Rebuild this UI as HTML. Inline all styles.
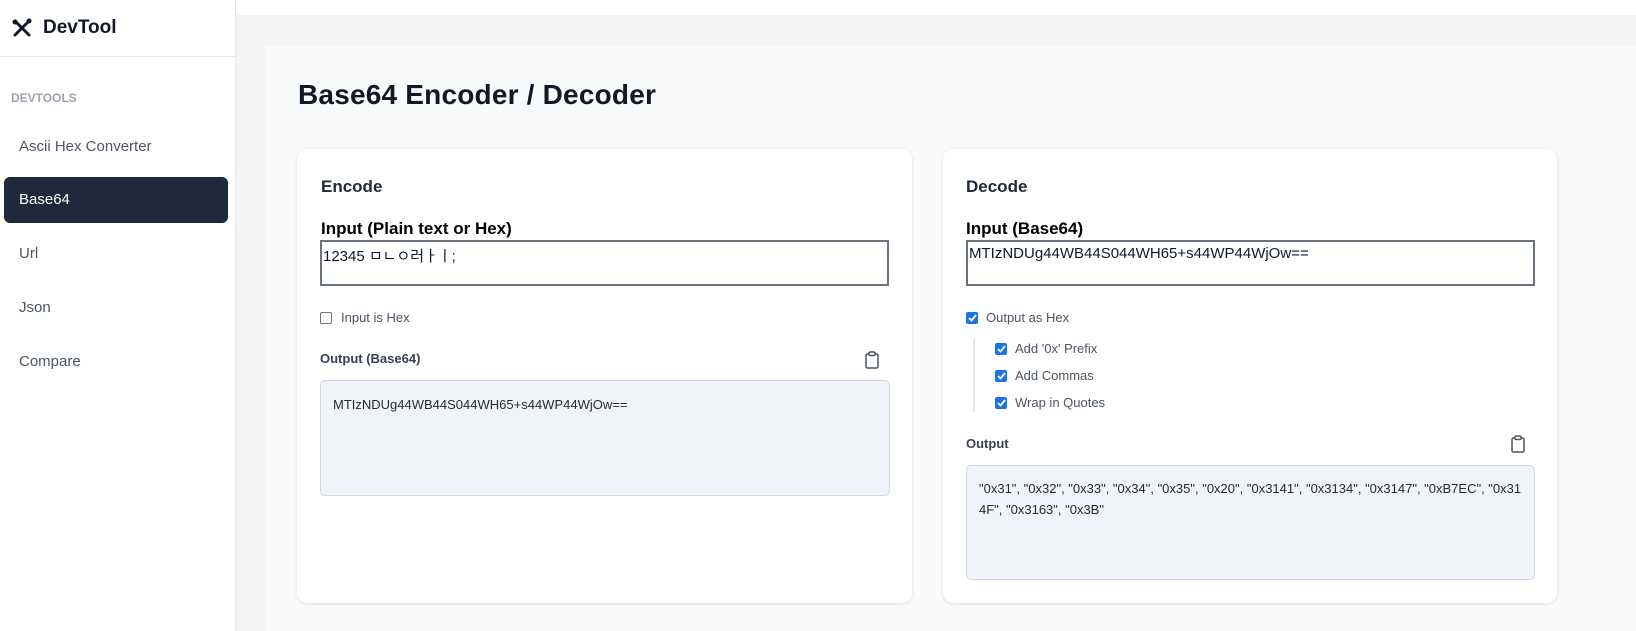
<!DOCTYPE html>
<html><head><meta charset="utf-8"><style>
*{box-sizing:border-box;margin:0;padding:0}
body{width:1636px;height:631px;overflow:hidden;font-family:"Liberation Sans","Noto Sans CJK KR",sans-serif;background:#fff;position:relative;color:#111827}
.side{position:absolute;left:0;top:0;width:236px;height:631px;background:#fff;border-right:1px solid #e5e7eb}
.logo{height:57px;border-bottom:1px solid #e5e7eb;display:flex;align-items:center;padding-left:11px;font-weight:bold;font-size:19px;color:#111827}
.logo svg{margin-right:10px}
.sec{position:absolute;left:11px;top:91px;font-size:12px;font-weight:bold;color:#9ca3af}
.nav{position:absolute;left:19px;font-size:15px;color:#4b5563}
.act{position:absolute;left:4px;top:177px;width:224px;height:46px;background:#1e293b;border-radius:6px;color:#fff;font-size:15px;padding:14px 0 0 15px}
.main{position:absolute;left:236px;top:15px;right:0;bottom:0;background:#f3f4f6}
.inner{position:absolute;left:266px;top:46px;right:0;bottom:0;background:#f9fafb}
h1{position:absolute;left:298px;top:79px;font-size:28px;font-weight:900;color:#111827;letter-spacing:0.2px}
.card{position:absolute;top:149px;height:454px;background:#fff;border-radius:10px;box-shadow:0 1px 3px rgba(0,0,0,.12)}
.t{position:absolute;font-size:17px;font-weight:bold;color:#1f2937}
.lbl{position:absolute;font-size:17px;font-weight:bold;color:#000}
.ta{position:absolute;border:2px solid #6b7280;height:46px;font-size:15px;padding:3px 1px}
.cb{position:absolute;font-size:13px;color:#4b5563;display:flex;align-items:center}
.box{width:12px;height:12px;border:1px solid #6b7280;border-radius:2px;margin-right:9px;background:#fff}
.chk{width:12px;height:12px;border-radius:2px;margin-right:8px;background:#1a73e8;display:flex;align-items:center;justify-content:center}
.ol{position:absolute;font-size:13px;font-weight:bold;color:#374151}
.out{position:absolute;background:#f0f3f8;border:1px solid #d1d9e6;border-radius:5px;font-size:13px;color:#1f2937;line-height:21px}
</style></head><body>
<div class="side">
<div class="logo"><svg width="22" height="20" viewBox="0 0 22 20"><path d="M4 3l14 14M4 17l6-6M12 9l6-6" stroke="#111827" stroke-width="3" fill="none" stroke-linecap="round"/><circle cx="4" cy="4" r="2.5" fill="#111827"/><circle cx="18" cy="3" r="2.5" fill="#111827"/></svg>DevTool</div>
<div class="sec">DEVTOOLS</div>
<div class="nav" style="top:138px">Ascii Hex Converter</div>
<div class="act">Base64</div>
<div class="nav" style="top:245px">Url</div>
<div class="nav" style="top:299px">Json</div>
<div class="nav" style="top:353px">Compare</div>
</div>
<div class="main"></div>
<div class="inner"></div>
<h1>Base64 Encoder / Decoder</h1>
<div class="card" style="left:297px;width:615px"></div>
<div class="card" style="left:943px;width:614px"></div>
<div class="t" style="left:321px;top:177px">Encode</div>
<div class="lbl" style="left:321px;top:219px">Input (Plain text or Hex)</div>
<div class="ta" style="left:320px;top:240px;width:569px">12345 ㅁㄴㅇ러ㅏㅣ;</div>
<div class="cb" style="left:320px;top:310px"><div class="box"></div>Input is Hex</div>
<div class="ol" style="left:320px;top:351px">Output (Base64)</div>
<svg style="position:absolute;left:864px;top:351px" width="16" height="18" viewBox="0 0 16 18"><rect x="2" y="3" width="12" height="14" rx="1.5" fill="none" stroke="#4b5563" stroke-width="1.5"/><rect x="5" y="1" width="6" height="3.5" rx="1" fill="#fff" stroke="#4b5563" stroke-width="1.5"/></svg>
<div class="out" style="left:320px;top:380px;width:570px;height:116px;padding:13px 12px">MTIzNDUg44WB44S044WH65+s44WP44WjOw==</div>
<div class="t" style="left:966px;top:177px">Decode</div>
<div class="lbl" style="left:966px;top:219px">Input (Base64)</div>
<div class="ta" style="left:966px;top:240px;width:569px">MTIzNDUg44WB44S044WH65+s44WP44WjOw==</div>
<div class="cb" style="left:966px;top:310px"><div class="chk"><svg width="9" height="8"><path d="M1 4l2.5 2.5L8 1" stroke="#fff" stroke-width="1.8" fill="none"/></svg></div>Output as Hex</div>
<div style="position:absolute;left:973px;top:338px;width:2px;height:74px;background:#e5e7eb"></div>
<div class="cb" style="left:995px;top:341px"><div class="chk"><svg width="9" height="8"><path d="M1 4l2.5 2.5L8 1" stroke="#fff" stroke-width="1.8" fill="none"/></svg></div>Add '0x' Prefix</div>
<div class="cb" style="left:995px;top:368px"><div class="chk"><svg width="9" height="8"><path d="M1 4l2.5 2.5L8 1" stroke="#fff" stroke-width="1.8" fill="none"/></svg></div>Add Commas</div>
<div class="cb" style="left:995px;top:395px"><div class="chk"><svg width="9" height="8"><path d="M1 4l2.5 2.5L8 1" stroke="#fff" stroke-width="1.8" fill="none"/></svg></div>Wrap in Quotes</div>
<div class="ol" style="left:966px;top:436px">Output</div>
<svg style="position:absolute;left:1510px;top:435px" width="16" height="18" viewBox="0 0 16 18"><rect x="2" y="3" width="12" height="14" rx="1.5" fill="none" stroke="#4b5563" stroke-width="1.5"/><rect x="5" y="1" width="6" height="3.5" rx="1" fill="#fff" stroke="#4b5563" stroke-width="1.5"/></svg>
<div class="out" style="left:966px;top:465px;width:569px;height:115px;padding:12px 12px;word-break:break-all">"0x31", "0x32", "0x33", "0x34", "0x35", "0x20", "0x3141", "0x3134", "0x3147", "0xB7EC", "0x314F", "0x3163", "0x3B"</div>
</body></html>
